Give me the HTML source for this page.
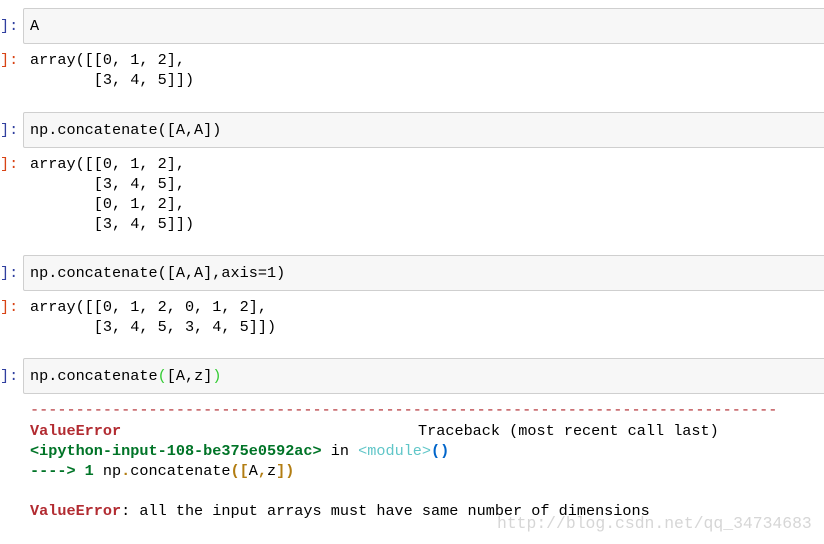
<!DOCTYPE html><html><head><style>
body{margin:0;width:824px;height:544px;background:#fff;position:relative;overflow:hidden;font-family:"Liberation Mono","Noto Sans CJK SC",monospace;font-size:15.2px;}
.t{position:absolute;white-space:pre;line-height:20px;}
.box{position:absolute;left:23px;width:805px;height:34px;background:#f7f7f7;border:1px solid #cfcfcf;border-radius:2px;}
.pi{color:#303f9f;}.po{color:#d84315;}
.r{color:#b22b31;font-weight:bold}.g{color:#007427;font-weight:bold}.c{color:#60c6c8}.b{color:#0065ca;font-weight:bold}.y{color:#b27d12;font-weight:bold}
</style></head><body>
<div class="box" style="top:8px"></div>
<div class="box" style="top:112px"></div>
<div class="box" style="top:255px"></div>
<div class="box" style="top:358px"></div>
<div class="t pi" style="left:0;top:16px">]:</div>
<div class="t" style="left:30px;top:16px">A</div>
<div class="t po" style="left:0;top:50px">]:</div>
<div class="t" style="left:30px;top:50px">array([[0, 1, 2],
       [3, 4, 5]])</div>
<div class="t pi" style="left:0;top:120px">]:</div>
<div class="t" style="left:30px;top:120px">np.concatenate([A,A])</div>
<div class="t po" style="left:0;top:154px">]:</div>
<div class="t" style="left:30px;top:154px">array([[0, 1, 2],
       [3, 4, 5],
       [0, 1, 2],
       [3, 4, 5]])</div>
<div class="t pi" style="left:0;top:263px">]:</div>
<div class="t" style="left:30px;top:263px">np.concatenate([A,A],axis=1)</div>
<div class="t po" style="left:0;top:297px">]:</div>
<div class="t" style="left:30px;top:297px">array([[0, 1, 2, 0, 1, 2],
       [3, 4, 5, 3, 4, 5]])</div>
<div class="t pi" style="left:0;top:366px">]:</div>
<div class="t" style="left:30px;top:366px">np.concatenate<span style="color:#3c3">(</span>[A,z]<span style="color:#3c3">)</span></div>
<div class="t" style="left:30px;top:400px;color:#b22b31">----------------------------------------------------------------------------------</div>
<div class="t" style="left:30px;top:421px"><span class="r">ValueError</span></div>
<div class="t" style="left:418px;top:421px">Traceback (most recent call last)</div>
<div class="t" style="left:30px;top:441px"><span class="g">&lt;ipython-input-108-be375e0592ac&gt;</span> in <span class="c">&lt;module&gt;</span><span class="b">()</span></div>
<div class="t" style="left:30px;top:461px"><span class="g">----&gt; 1</span> np<span class="y">.</span>concatenate<span class="y">([</span>A<span class="y">,</span>z<span class="y">])</span></div>
<div class="t" style="left:30px;top:501px"><span class="r">ValueError</span>: all the input arrays must have same number of dimensions</div>
<div class="t" style="left:497px;top:514px;color:#d6d6d6;font-size:16.4px">http://blog.csdn.net/qq_34734683</div>
</body></html>
